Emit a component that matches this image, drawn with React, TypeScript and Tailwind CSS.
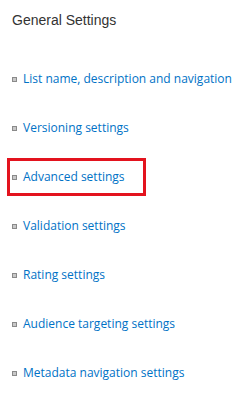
import React from "react";

const items = [
  "List name, description and navigation",
  "Versioning settings",
  "Advanced settings",
  "Validation settings",
  "Rating settings",
  "Audience targeting settings",
  "Metadata navigation settings",
];

export default function App() {
  return (
    <div className="w-[237px] h-[393px] bg-white overflow-hidden">
      <div
        className="pl-[12px] pt-[11px] h-[60px] text-[14px] leading-[18px] text-[#333333]"
        style={{ fontFamily: '"Liberation Sans", Arial, sans-serif' }}
      >
        General Settings
      </div>
      <div className="flex flex-col gap-[11px] pl-[7px]">
        {items.map((t, i) => (
          <div
            key={t}
            className={
              "flex items-center h-[38px] w-[139px] border-[3px] pl-[2px] whitespace-nowrap " +
              (i === 2 ? "border-[#e3131e]" : "border-transparent")
            }
          >
            <span className="w-[5px] h-[5px] bg-[#c8c8c8] border border-[#8a8a8a] mr-[6px] shrink-0" />
            <span
              className="text-[12px] leading-[16px] text-[#0072c6]"
              style={{ fontFamily: '"Open Sans", "Noto Sans", sans-serif' }}
            >
              {t}
            </span>
          </div>
        ))}
      </div>
    </div>
  );
}
